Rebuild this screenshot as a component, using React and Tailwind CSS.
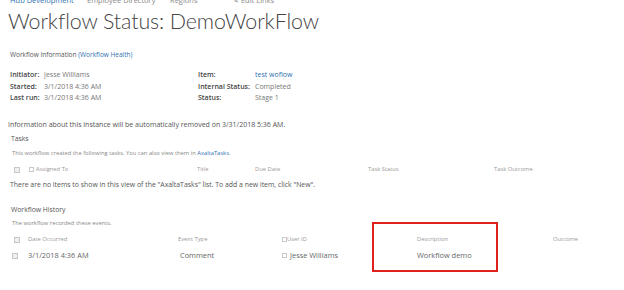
const Box = ({ className = "" }) => (
  <span className={"inline-block w-[6px] h-[6px] border border-[#c8c8c8] bg-[#f0f0f0] " + className}></span>
);

const infoLeft = [
  ["Initiator:", "Jesse Williams"],
  ["Started:", "3/1/2018 4:36 AM"],
  ["Last run:", "3/1/2018 4:36 AM"],
];

const infoRight = [
  ["Item:", "test woflow", true],
  ["Internal Status:", "Completed"],
  ["Status:", "Stage 1"],
];

export default function App() {
  return (
    <div className="relative w-[624px] h-[290px] overflow-hidden bg-white font-['Open_Sans',sans-serif] text-[#5a5a5a]">
      {/* top nav, cut off by the screenshot edge */}
      <div className="flex items-center h-[8px] -mt-[4px] text-[7.5px] leading-[8px] text-[#888]">
        <span className="ml-[10px] w-[77px] text-[#2f6fb0]">Hub Development</span>
        <span className="w-[83px]">Employee Directory</span>
        <span className="w-[62px]">Regions</span>
        <span>✎ Edit Links</span>
      </div>

      <h1 className="ml-[8px] mt-[5px] text-[21.4px] leading-[24px] font-light text-[#444] font-['Lato',sans-serif] tracking-[-0.1px]">
        Workflow Status: DemoWorkFlow
      </h1>

      <div className="ml-[10px] mt-[17px] text-[6.5px] leading-[10px] text-[#555]">
        Workflow Information <span className="text-[#2f6fb0]">(Workflow Health)</span>
      </div>

      <div className="flex mt-[9px] text-[7px] leading-[11.5px]">
        <div className="ml-[10px] w-[188px]">
          {infoLeft.map(([k, v]) => (
            <div key={k} className="flex">
              <span className="w-[34px] font-semibold text-[#444]">{k}</span>
              <span className="text-[#777]">{v}</span>
            </div>
          ))}
        </div>
        <div>
          {infoRight.map(([k, v, link]) => (
            <div key={k} className="flex">
              <span className="w-[57px] font-semibold text-[#444]">{k}</span>
              <span className={link ? "text-[#2f6fb0]" : "text-[#777]"}>{v}</span>
            </div>
          ))}
        </div>
      </div>

      <div className="ml-[8px] mt-[16px] text-[7px] leading-[10px] text-[#555]">
        Information about this instance will be automatically removed on 3/31/2018 5:36 AM.
      </div>

      <div className="ml-[11px] mt-[4px] text-[6.8px] leading-[10px] text-[#555]">Tasks</div>
      <div className="ml-[12px] mt-[5px] text-[5.8px] leading-[9px] text-[#888]">
        This workflow created the following tasks. You can also view them in{" "}
        <span className="text-[#2f6fb0]">AxaltaTasks</span>.
      </div>

      <div className="flex items-center mt-[7px] h-[10px] text-[5.8px] text-[#999]">
        <Box className="ml-[14px]" />
        <span className="ml-[9px] flex items-center w-[168px]">
          <Box className="mr-[2px] !w-[5px] !h-[5px] !bg-white" />Assigned To
        </span>
        <span className="w-[58px]">Title</span>
        <span className="w-[113px]">Due Date</span>
        <span className="w-[126px]">Task Status</span>
        <span>Task Outcome</span>
      </div>

      <div className="ml-[10px] mt-[5px] text-[6.9px] leading-[10px] text-[#555]">
        There are no items to show in this view of the "AxaltaTasks" list. To add a new item, click "New".
      </div>

      <div className="ml-[11px] mt-[15px] text-[6.8px] leading-[10px] text-[#555]">Workflow History</div>
      <div className="ml-[12px] mt-[4px] text-[5.8px] leading-[9px] text-[#888]">
        The workflow recorded these events.
      </div>

      <div className="flex items-center mt-[7px] h-[10px] text-[5.8px] text-[#999]">
        <Box className="ml-[14px]" />
        <span className="ml-[8px] w-[150px]">Date Occurred</span>
        <span className="w-[104px]">Event Type</span>
        <span className="w-[135px] flex items-center">
          <Box className="!w-[5px] !h-[5px] !bg-white" />User ID
        </span>
        <span className="w-[136px]">Description</span>
        <span>Outcome</span>
      </div>

      <div className="flex items-center mt-[5px] h-[12px] text-[7.4px] text-[#666]">
        <Box className="ml-[12px]" />
        <span className="ml-[10px] w-[152px]">3/1/2018 4:36 AM</span>
        <span className="w-[102px]">Comment</span>
        <span className="w-[135px] flex items-center">
          <Box className="mr-[3px] !w-[5px] !h-[5px] !bg-white" />Jesse Williams
        </span>
        <span>Workflow demo</span>
      </div>

      {/* red highlight annotation */}
      <div className="absolute left-[372px] top-[222px] w-[126px] h-[50px] border-2 border-[#e0201c]"></div>
    </div>
  );
}
